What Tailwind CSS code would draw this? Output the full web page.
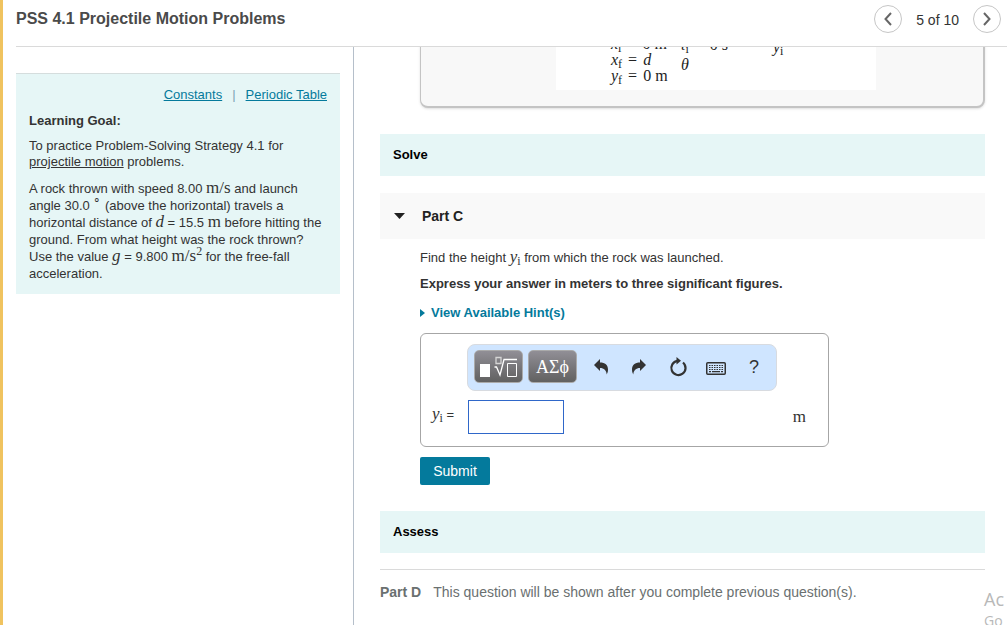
<!DOCTYPE html>
<html lang="en">

<head>
    <meta charset="UTF-8">
    <meta name="viewport" content="width=device-width, initial-scale=1.0">
    <script src="https://cdn.jsdelivr.net/npm/@tailwindcss/browser@4"></script>
    <title>PSS 4.1 Projectile Motion Problems</title>
</head>

<body class="relative h-screen overflow-hidden flex flex-col bg-white border-l-3 border-[#f0c35f] pl-[13px] font-['Liberation_Sans',Arial,sans-serif] text-[13px] leading-4 text-[#333]">

    <!-- title bar -->
    <header class="shrink-0 h-[47px] flex items-center justify-between border-b border-[#dadada] pb-2 pr-1.5">
        <h1 class="text-base font-bold text-[#4a4a4a]">PSS 4.1 Projectile Motion Problems</h1>
        <nav class="flex items-center gap-3.5 text-sm">
            <button aria-label="Previous" class="size-7 rounded-full border border-[#c6c6c6] flex items-center justify-center">
                <svg class="w-2 h-3.5" viewBox="0 0 8 14" fill="none" stroke="#666" stroke-width="2"><path d="M7 1 1.500 7 7 13" /></svg>
            </button>
            <span class="pt-0.5">5 of 10</span>
            <button aria-label="Next" class="size-7 rounded-full border border-[#c6c6c6] flex items-center justify-center">
                <svg class="w-2 h-3.5" viewBox="0 0 8 14" fill="none" stroke="#666" stroke-width="2"><path d="M1 1 6.500 7 1 13" /></svg>
            </button>
        </nav>
    </header>

    <div class="flex-1 min-h-0 flex">
        <!-- learning goal -->
        <aside class="shrink-0 w-[338px] border-r border-[#b5bfca] pt-[26px] pr-[13px]">
            <div class="bg-[#e6f6f6] border-t border-[#d5dddd] px-[13px] pt-3 pb-3">
                <div class="flex justify-end gap-2.5 leading-[18px] text-[#047a9c]">
                    <a href="#" class="underline">Constants</a>
                    <span class="text-[#7ba3b5]">|</span>
                    <a href="#" class="underline">Periodic Table</a>
                </div>
                <h2 class="font-bold mt-[9px]">Learning Goal:</h2>
                <p class="mt-[9px]">To practice Problem-Solving Strategy 4.1 for <br><a href="#" class="underline">projectile motion</a> problems.</p>
                <p class="mt-2.5 leading-[17px]">
                    A rock thrown with speed 8.00 <span class="font-['Liberation_Serif',serif] text-[17px] leading-3">m/s</span> and launch<br>
                    angle 30.0 <sup class="font-['Liberation_Serif',serif] text-xs leading-none">∘</sup> (above the horizontal) travels a<br>
                    horizontal distance of <i class="font-['Liberation_Serif',serif] text-[17px] leading-3">d</i> = 15.5 <span class="font-['Liberation_Serif',serif] text-[17px] leading-3">m</span> before hitting the<br>
                    ground. From what height was the rock thrown?<br>
                    Use the value <i class="font-['Liberation_Serif',serif] text-[17px] leading-3">g</i> = 9.800 <span class="font-['Liberation_Serif',serif] text-[17px] leading-3">m/s<sup class="text-xs leading-none">2</sup></span> for the free-fall<br>
                    acceleration.
                </p>
            </div>
        </aside>

        <main class="flex-1 min-w-0 overflow-hidden pl-[26px] pr-[22px]">
            <!-- known / unknown quantities, scrolled partly out of view -->
            <section class="-mt-6 ml-10 bg-[#f8f8f8] border border-b-2 border-r-2 border-[#c4c4c4] rounded-lg pb-4 shadow-sm">
                <div class="w-80 ml-[135px] bg-white flex items-start pl-[55px] pt-3 pb-1.5 font-['Liberation_Serif',serif] text-[16px] leading-4 text-[#222]">
                    <div class="w-[70px]">
                        <div class="flex gap-1.5"><span><i>x</i><sub class="text-xs leading-none">i</sub></span> <span>=</span> <span>0 m</span></div>
                        <div class="flex gap-1.5"><span><i>x</i><sub class="text-xs leading-none">f</sub></span> <span>=</span> <i>d</i></div>
                        <div class="flex gap-1.5"><span><i>y</i><sub class="text-xs leading-none">f</sub></span> <span>=</span> <span>0 m</span></div>
                    </div>
                    <div class="w-[92px] leading-[18px]">
                        <div class="flex gap-1.5"><span><i>t</i><sub class="text-xs leading-none">i</sub></span> <span>=</span> <span>0 s</span></div>
                        <div class="pt-0.5"><i>θ</i></div>
                    </div>
                    <div class="pt-0.5 leading-[18px]"><i>y</i><sub class="text-xs leading-none">i</sub></div>
                </div>
            </section>

            <h2 class="mt-[26px] h-[42px] flex items-center bg-[#e6f6f6] px-[13px] font-bold text-black">Solve</h2>

            <div class="mt-[17px] h-[46px] flex items-center gap-[17px] bg-[#f9f9f9] px-[14px]">
                <svg class="w-[11px] h-1.5" viewBox="0 0 11 6" fill="#222"><path d="M0 0h11L5.500 6z" /></svg>
                <h3 class="text-sm font-bold text-[#222]">Part C</h3>
            </div>

            <div class="pl-10">
                <p class="mt-[11px]">Find the height <span class="font-['Liberation_Serif',serif] text-[17px] leading-3"><i>y</i><sub class="text-xs leading-none">i</sub></span> from which the rock was launched.</p>
                <p class="mt-[10px] font-bold">Express your answer in meters to three significant figures.</p>
                <button class="mt-[13px] flex items-center gap-1.5 font-bold text-[#047a9c]">
                    <svg class="w-[5px] h-2" viewBox="0 0 5 8" fill="#047a9c"><path d="M0 0v8l5-4z" /></svg>
                    View Available Hint(s)
                </button>

                <!-- answer box -->
                <form class="mt-3 w-[409px] border border-[#a6a6a6] rounded-md pt-2.5 pb-3">
                    <div class="ml-[46px] w-[310px] h-[47px] flex items-center bg-[#cfe5ff] border border-[#d8dbe0] rounded-lg pl-1.5 pb-0.5 text-[#333]">
                        <button type="button" aria-label="Templates" class="w-[49px] h-[33px] rounded-[5px] border border-[#aaa] bg-linear-to-b from-[#918f96] to-[#616161] flex items-center justify-center">
                            <svg class="w-[37px] h-[22px]" viewBox="0 0 37 22" fill="none" stroke="#fff">
                                <path d="M0 8h10v13H0z" fill="#fff" stroke="none" />
                                <path d="M16 1.500h5v6h-5z" stroke="#d5d5d5" stroke-width="1.300" />
                                <path d="M14.500 11h2l3.500 8 4-15.500h13" stroke-width="1.300" />
                                <path d="M27.500 7.500h9v13h-9z" />
                            </svg>
                        </button>
                        <button type="button" class="ml-[5px] w-[49px] h-[33px] rounded-[5px] border border-[#aaa] bg-linear-to-b from-[#918f96] to-[#616161] font-['Liberation_Serif',serif] text-lg leading-none text-white">ΑΣϕ</button>
                        <button type="button" aria-label="Undo" class="ml-[17px]">
                            <svg class="w-[14px] h-4" viewBox="0 0 14 16" fill="#333"><path d="M6 0v3.500c5 0 8 2.500 8 7 0 2-.5 3.500-1.300 5C12.500 11.500 10 9 6 9v3L0 6z" /></svg>
                        </button>
                        <button type="button" aria-label="Redo" class="ml-6">
                            <svg class="w-[14px] h-4" viewBox="0 0 14 16" fill="#333"><path d="M8 0v3.500c-5 0-8 2.500-8 7 0 2 .5 3.500 1.300 5C1.500 11.500 4 9 8 9v3l6-6z" /></svg>
                        </button>
                        <button type="button" aria-label="Reset" class="ml-[23px]">
                            <svg class="w-[18px] h-5" viewBox="0 0 18 20" fill="none"><path d="M14 5.500A7.100 7.100 0 1 1 8.500 3.900" stroke="#333" stroke-width="2.200" /><path d="M7.500 0l4.500 3.800-4.500 3.700z" fill="#333" /></svg>
                        </button>
                        <button type="button" aria-label="Keyboard shortcuts" class="ml-[19px] pt-1">
                            <svg class="w-5 h-[13px]" viewBox="0 0 20 13" fill="none" stroke="#333">
                                <rect x=".75" y=".75" width="18.500" height="11.500" rx="1" stroke-width="1.500" />
                                <path d="M3 3.500h14M3 5.500h14M3 7.500h14" stroke-dasharray="1.500 1" />
                                <path d="M3 9.700h2M6 9.700h8M15 9.700h2" stroke-width="1.300" />
                            </svg>
                        </button>
                        <button type="button" aria-label="Help" class="ml-[23px] text-lg leading-none">?</button>
                    </div>
                    <div class="mt-[9px] flex items-center pl-[11px] pr-[22px]">
                        <label for="answer" class="w-9 pb-1"><span class="font-['Liberation_Serif',serif] text-[17px] leading-3"><i>y</i><sub class="text-xs leading-none">i</sub></span> =</label>
                        <input id="answer" type="text" class="w-24 h-[34px] border border-[#2f67c9] bg-white px-2">
                        <span class="ml-auto font-['Liberation_Serif',serif] text-[17px]">m</span>
                    </div>
                </form>

                <button class="mt-2.5 w-[70px] h-7 rounded-xs bg-[#047a9c] text-sm text-white">Submit</button>
            </div>

            <h2 class="mt-[26px] h-[42px] flex items-center bg-[#e6f6f6] px-[13px] font-bold text-black">Assess</h2>

            <div class="mt-4 border-t border-[#dadada] pt-3.5 flex gap-3 text-sm leading-4 text-[#6a7070]">
                <h3 class="font-bold">Part D</h3>
                <p>This question will be shown after you complete previous question(s).</p>
            </div>
        </main>
    </div>

    <!-- system notice over the corner -->
    <div class="absolute left-[981px] top-[587px] font-['Open_Sans',sans-serif] text-[#b8b8b8]">
        <div class="text-lg leading-6">Ac</div>
        <div class="text-sm leading-5">Go</div>
    </div>
</body>

</html>
